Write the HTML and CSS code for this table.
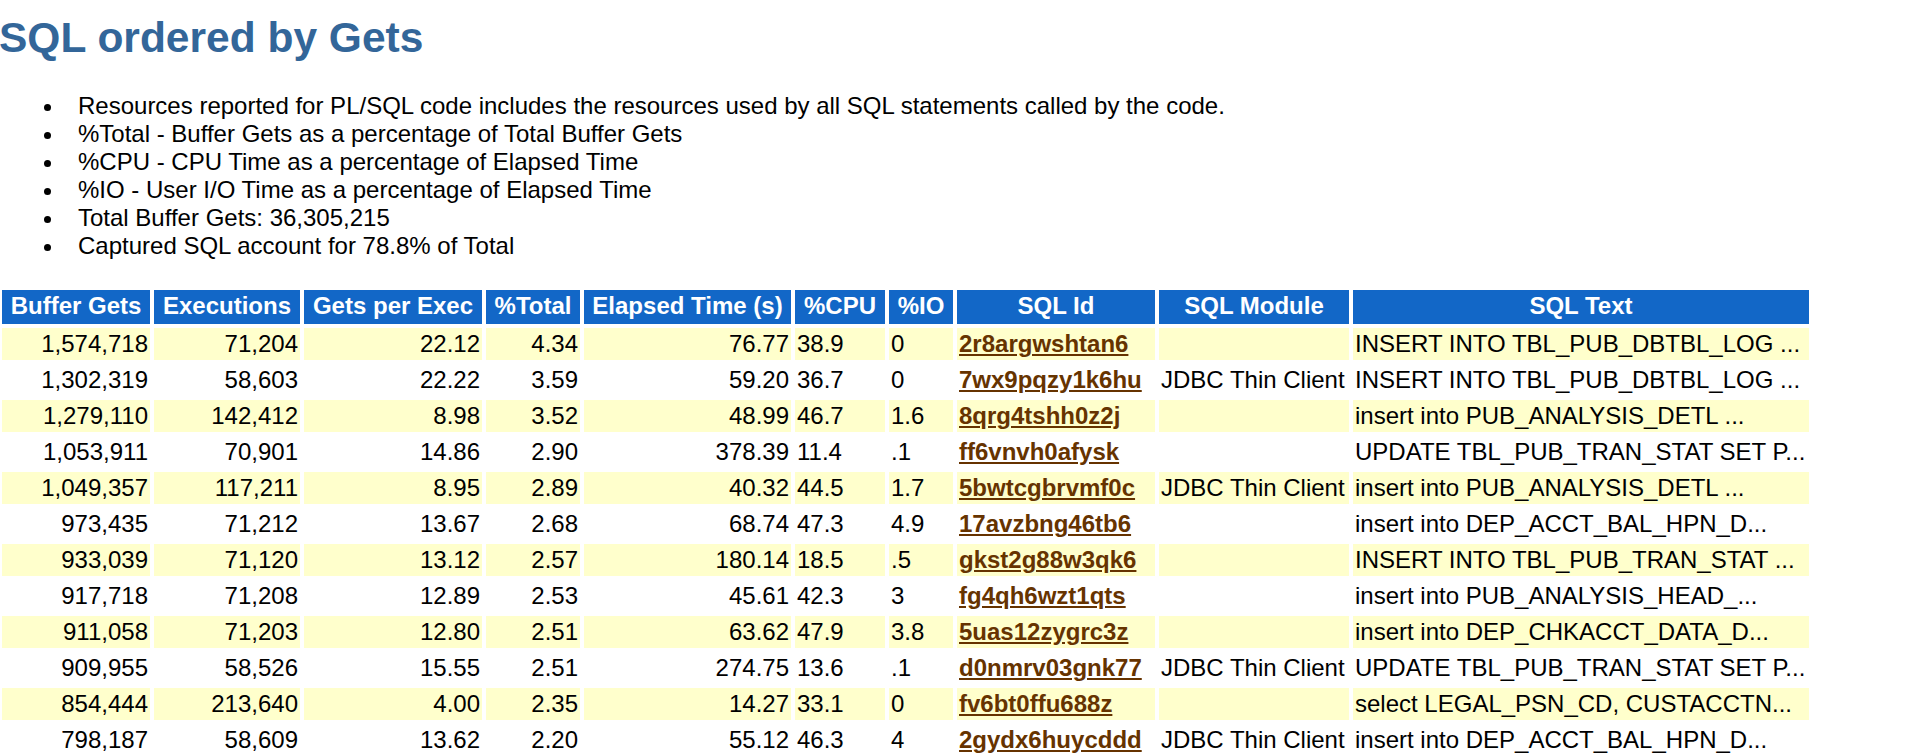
FILE: index.html
```html
<!DOCTYPE html>
<html>
<head>
<meta charset="utf-8">
<title>SQL ordered by Gets</title>
<link rel="stylesheet" href="styles.css">
</head>
<body class="awr">
<h2 class="awr">SQL ordered by Gets</h2>
<ul class="notes">
<li>Resources reported for PL/SQL code includes the resources used by all SQL statements called by the code.</li>
<li>%Total - Buffer Gets as a percentage of Total Buffer Gets</li>
<li>%CPU - CPU Time as a percentage of Elapsed Time</li>
<li>%IO - User I/O Time as a percentage of Elapsed Time</li>
<li>Total Buffer Gets: 36,305,215</li>
<li>Captured SQL account for 78.8% of Total</li>
</ul>
<table class="tdiff">
<thead>
<tr>
<th class="c-gets">Buffer Gets</th>
<th class="c-exec">Executions</th>
<th class="c-gpe">Gets per Exec</th>
<th class="c-tot">%Total</th>
<th class="c-ela">Elapsed Time (s)</th>
<th class="c-cpu">%CPU</th>
<th class="c-io">%IO</th>
<th class="c-id">SQL Id</th>
<th class="c-mod">SQL Module</th>
<th class="c-txt">SQL Text</th>
</tr>
</thead>
<tbody>
<tr class="hl"><td class="r">1,574,718</td><td class="r">71,204</td><td class="r">22.12</td><td class="r">4.34</td><td class="r">76.77</td><td>38.9</td><td>0</td><td><a class="awr" href="#2r8argwshtan6">2r8argwshtan6</a></td><td></td><td>INSERT INTO TBL_PUB_DBTBL_LOG ...</td></tr>
<tr><td class="r">1,302,319</td><td class="r">58,603</td><td class="r">22.22</td><td class="r">3.59</td><td class="r">59.20</td><td>36.7</td><td>0</td><td><a class="awr" href="#7wx9pqzy1k6hu">7wx9pqzy1k6hu</a></td><td>JDBC Thin Client</td><td>INSERT INTO TBL_PUB_DBTBL_LOG ...</td></tr>
<tr class="hl"><td class="r">1,279,110</td><td class="r">142,412</td><td class="r">8.98</td><td class="r">3.52</td><td class="r">48.99</td><td>46.7</td><td>1.6</td><td><a class="awr" href="#8qrg4tshh0z2j">8qrg4tshh0z2j</a></td><td></td><td>insert into PUB_ANALYSIS_DETL ...</td></tr>
<tr><td class="r">1,053,911</td><td class="r">70,901</td><td class="r">14.86</td><td class="r">2.90</td><td class="r">378.39</td><td>11.4</td><td>.1</td><td><a class="awr" href="#ff6vnvh0afysk">ff6vnvh0afysk</a></td><td></td><td>UPDATE TBL_PUB_TRAN_STAT SET P...</td></tr>
<tr class="hl"><td class="r">1,049,357</td><td class="r">117,211</td><td class="r">8.95</td><td class="r">2.89</td><td class="r">40.32</td><td>44.5</td><td>1.7</td><td><a class="awr" href="#5bwtcgbrvmf0c">5bwtcgbrvmf0c</a></td><td>JDBC Thin Client</td><td>insert into PUB_ANALYSIS_DETL ...</td></tr>
<tr><td class="r">973,435</td><td class="r">71,212</td><td class="r">13.67</td><td class="r">2.68</td><td class="r">68.74</td><td>47.3</td><td>4.9</td><td><a class="awr" href="#17avzbng46tb6">17avzbng46tb6</a></td><td></td><td>insert into DEP_ACCT_BAL_HPN_D...</td></tr>
<tr class="hl"><td class="r">933,039</td><td class="r">71,120</td><td class="r">13.12</td><td class="r">2.57</td><td class="r">180.14</td><td>18.5</td><td>.5</td><td><a class="awr" href="#gkst2g88w3qk6">gkst2g88w3qk6</a></td><td></td><td>INSERT INTO TBL_PUB_TRAN_STAT ...</td></tr>
<tr><td class="r">917,718</td><td class="r">71,208</td><td class="r">12.89</td><td class="r">2.53</td><td class="r">45.61</td><td>42.3</td><td>3</td><td><a class="awr" href="#fg4qh6wzt1qts">fg4qh6wzt1qts</a></td><td></td><td>insert into PUB_ANALYSIS_HEAD_...</td></tr>
<tr class="hl"><td class="r">911,058</td><td class="r">71,203</td><td class="r">12.80</td><td class="r">2.51</td><td class="r">63.62</td><td>47.9</td><td>3.8</td><td><a class="awr" href="#5uas12zygrc3z">5uas12zygrc3z</a></td><td></td><td>insert into DEP_CHKACCT_DATA_D...</td></tr>
<tr><td class="r">909,955</td><td class="r">58,526</td><td class="r">15.55</td><td class="r">2.51</td><td class="r">274.75</td><td>13.6</td><td>.1</td><td><a class="awr" href="#d0nmrv03gnk77">d0nmrv03gnk77</a></td><td>JDBC Thin Client</td><td>UPDATE TBL_PUB_TRAN_STAT SET P...</td></tr>
<tr class="hl"><td class="r">854,444</td><td class="r">213,640</td><td class="r">4.00</td><td class="r">2.35</td><td class="r">14.27</td><td>33.1</td><td>0</td><td><a class="awr" href="#fv6bt0ffu688z">fv6bt0ffu688z</a></td><td></td><td>select LEGAL_PSN_CD, CUSTACCTN...</td></tr>
<tr><td class="r">798,187</td><td class="r">58,609</td><td class="r">13.62</td><td class="r">2.20</td><td class="r">55.12</td><td>46.3</td><td>4</td><td><a class="awr" href="#2gydx6huycddd">2gydx6huycddd</a></td><td>JDBC Thin Client</td><td>insert into DEP_ACCT_BAL_HPN_D...</td></tr>
</tbody>
</table>
</body>
</html>
```
FILE: styles.css
```css
html, body {
  background: #ffffff;
}
body.awr {
  margin: 0;
  padding: 13px 0 0 0;
  font-family: "Liberation Sans", Arial, Helvetica, sans-serif;
  color: #000000;
  overflow: hidden;
}
h2.awr {
  margin: 0 0 0 -1px;
  font-size: 42.5px;
  line-height: 49px;
  font-weight: bold;
  color: #336699;
}
.notes {
  list-style: none;
  margin: 30px 0 26px 0;
  padding: 0 0 0 78px;
  font-size: 24px;
  line-height: 28px;
}
.notes li::before {
  content: "";
  display: inline-block;
  width: 7px;
  height: 7px;
  border-radius: 50%;
  background: #000000;
  margin-left: -34px;
  margin-right: 27px;
  vertical-align: middle;
}
.tdiff {
  table-layout: fixed;
  border-collapse: separate;
  border-spacing: 4px;
  margin-left: -2px;
  font-size: 24px;
}
.tdiff th {
  box-sizing: border-box;
  background: #1267c7;
  color: #ffffff;
  font-weight: bold;
  line-height: 27px;
  padding: 2px 6px 5px 6px;
  text-align: center;
  white-space: nowrap;
}
.tdiff td {
  line-height: 27px;
  padding: 2px 2px 3px 2px;
  white-space: nowrap;
  vertical-align: top;
  text-align: left;
  background: #ffffff;
}
.tdiff tr.hl td {
  background: #ffffcc;
}
.tdiff td.r {
  text-align: right;
}
.c-gets { width: 148px; }
.c-exec { width: 146px; }
.c-gpe { width: 178px; }
.c-tot { width: 94px; }
.c-ela { width: 207px; }
.c-cpu { width: 90px; }
.c-io { width: 64px; }
.c-id { width: 198px; }
.c-mod { width: 190px; }
.c-txt { width: 456px; }
a.awr {
  font-weight: bold;
  color: #663300;
  text-decoration: underline;
}
```
